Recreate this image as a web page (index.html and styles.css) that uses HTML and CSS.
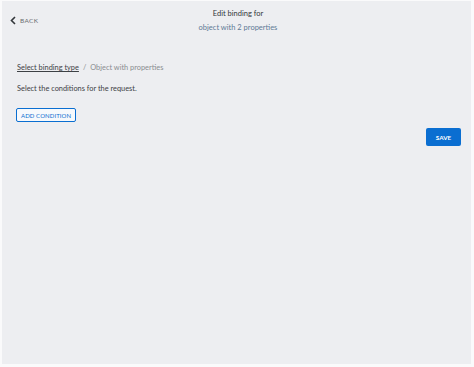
FILE: index.html
```html
<!DOCTYPE html>
<html>
<head>
<meta charset="utf-8">
<link rel="stylesheet" href="styles.css">
</head>
<body>
<div class="panel">
  <header class="top">
    <div class="back">
      <svg class="chev" width="6" height="9" viewBox="0 0 6 9"><path d="M5 1 L1.5 4.5 L5 8" fill="none" stroke="#32363a" stroke-width="1.6"/></svg>
      <span>BACK</span>
    </div>
    <div class="titles">
      <div class="title">Edit binding for</div>
      <div class="subtitle">object with 2 properties</div>
    </div>
  </header>
  <main class="content">
    <nav class="crumbs"><a class="crumb-link">Select binding type</a><span class="sep">/</span><span class="crumb-cur">Object with properties</span></nav>
    <p class="hint">Select the conditions for the request.</p>
    <button class="add">ADD CONDITION</button>
    <div class="actions"><button class="save">SAVE</button></div>
  </main>
</div>
</body>
</html>
```
FILE: styles.css
```css
html, body { margin: 0; padding: 0; background: #fafafb; }
body { font-family: "Lato", "Open Sans", "Liberation Sans", sans-serif; width: 474px; height: 367px; overflow: hidden; }
.panel { box-sizing: border-box; margin: 1px 3px 0 2px; height: 363px; background: #edeef1; }
.top { position: relative; height: 44px; }
.back { display: flex; align-items: center; gap: 4px; padding: 15px 0 0 8px; font-size: 6.5px; color: #6a6d70; letter-spacing: 0.3px; }
.titles { position: absolute; left: 0; right: 0; top: 7px; text-align: center; }
.title { font-size: 7.5px; color: #32363a; line-height: 11px; margin-left: 3px; }
.subtitle { font-size: 7.5px; color: #5e7a96; line-height: 11px; margin-top: 3px; margin-left: 3px; }
.content { padding: 17px 10px 0 15px; }
.crumbs { font-size: 7.4px; line-height: 11px; color: #8a8d90; display: flex; gap: 4px; }
.crumb-link { color: #3d4145; text-decoration: underline; }
.hint { margin: 10px 0 0; font-size: 7.4px; line-height: 11px; color: #3d4145; }
.add { margin-top: 14px; margin-left: -1px; font-family: inherit; font-size: 6px; color: #0a6ed1; background: #f7f9fc; border: 1px solid #0a6ed1; border-radius: 2px; height: 14px; padding: 0 4px; letter-spacing: 0.1px; }
.actions { display: flex; justify-content: flex-end; margin-top: 6px; }
.save { font-family: inherit; font-size: 6.3px; font-weight: 700; color: #fff; background: #0a6ed1; border: none; border-radius: 2px; width: 35px; height: 18px; padding: 0; }
```
